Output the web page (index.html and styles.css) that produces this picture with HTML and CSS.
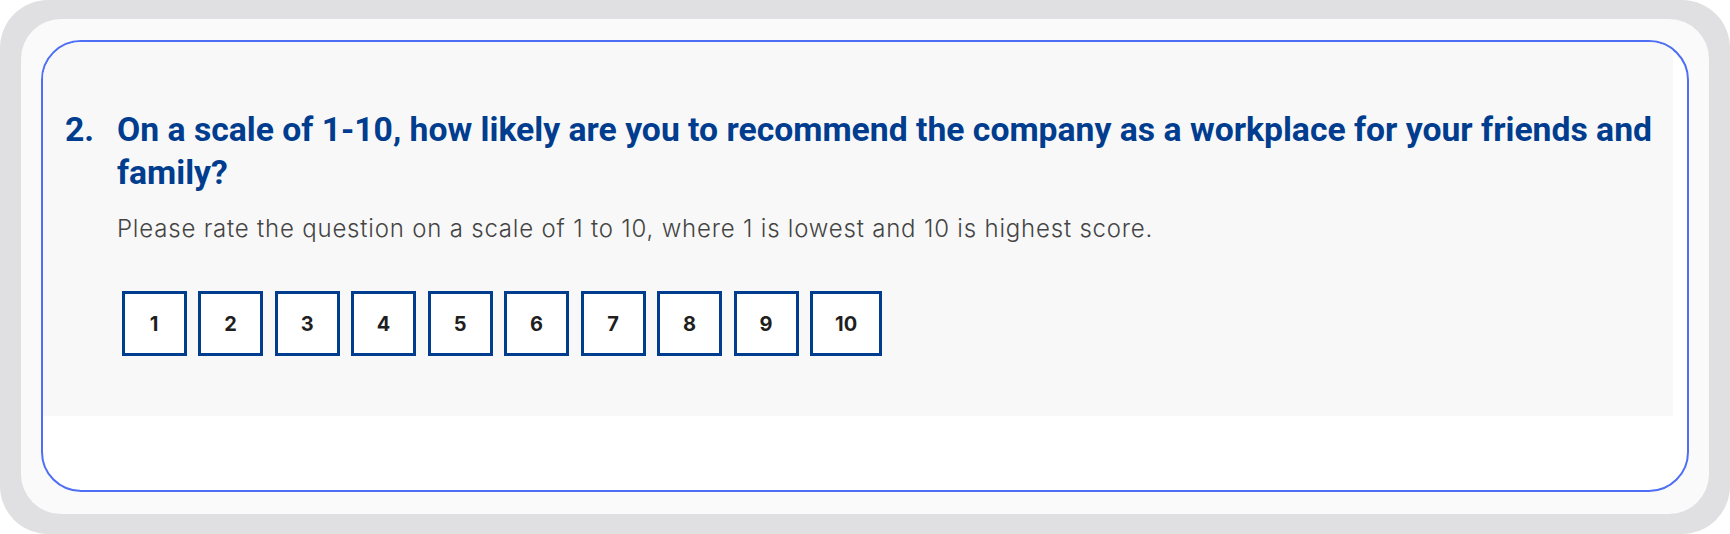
FILE: index.html
```html
<!DOCTYPE html>
<html lang="en">
<head>
<meta charset="utf-8">
<title>Survey question</title>
<link rel="stylesheet" href="styles.css">
</head>
<body>
<div class="frame">
  <div class="panel">
    <div class="card">
      <section class="question">
        <div class="qnum">2.</div>
        <div class="qbody">
          <h2 class="qtitle">On a scale of 1-10, how likely are you to recommend the company as a workplace for your friends and family?</h2>
          <p class="qhint">Please rate the question on a scale of 1 to 10, where 1 is lowest and 10 is highest score.</p>
          <div class="scale">
            <button class="opt">1</button>
            <button class="opt">2</button>
            <button class="opt">3</button>
            <button class="opt">4</button>
            <button class="opt">5</button>
            <button class="opt">6</button>
            <button class="opt">7</button>
            <button class="opt">8</button>
            <button class="opt">9</button>
            <button class="opt">10</button>
          </div>
        </div>
      </section>
    </div>
  </div>
</div>
</body>
</html>
```

FILE: styles.css
```css
* { box-sizing: border-box; }
html, body { margin: 0; padding: 0; background: #ffffff; }
body { width: 1730px; height: 534px; overflow: hidden; }

.frame {
  height: 534px;
  background: #e0e0e2;
  border-radius: 48px;
  padding: 19px 21px 20px 21px;
}
.panel {
  height: 100%;
  background: #fafafa;
  border-radius: 40px;
  padding: 21px 20px 22px 20px;
}
.card {
  height: 100%;
  background: #ffffff;
  border: 2px solid #4d6ef5;
  border-radius: 40px;
  overflow: hidden;
}
.question {
  display: flex;
  height: 374px;
  margin-right: 14px;
  background: #f8f8f8;
  padding: 66px 0 0 22px;
}
.qnum {
  flex: 0 0 52px;
  font-family: Roboto, "Liberation Sans", sans-serif;
  font-weight: 700;
  font-size: 33.7px;
  line-height: 43px;
  color: #003d8f;
}
.qbody { flex: 1; min-width: 0; }
.qtitle {
  margin: 0;
  font-family: Roboto, "Liberation Sans", sans-serif;
  font-weight: 700;
  font-size: 33.7px;
  line-height: 43px;
  color: #003d8f;
}
.qhint {
  margin: 19px 0 0 0;
  font-family: Inter, "Open Sans", sans-serif;
  font-weight: 300;
  font-size: 24px;
  letter-spacing: 0.8px;
  line-height: 32px;
  color: #444444;
}
.scale {
  display: flex;
  gap: 11.5px;
  margin: 46px 0 0 4.6px;
}
.opt {
  min-width: 65px;
  height: 65px;
  padding: 0 22px;
  border: 3px solid #003d8f;
  background: #ffffff;
  font-family: Inter, "Open Sans", sans-serif;
  font-weight: 700;
  font-size: 20px;
  color: #1f1f1f;
  display: flex;
  align-items: center;
  justify-content: center;
  border-radius: 0;
}
```
